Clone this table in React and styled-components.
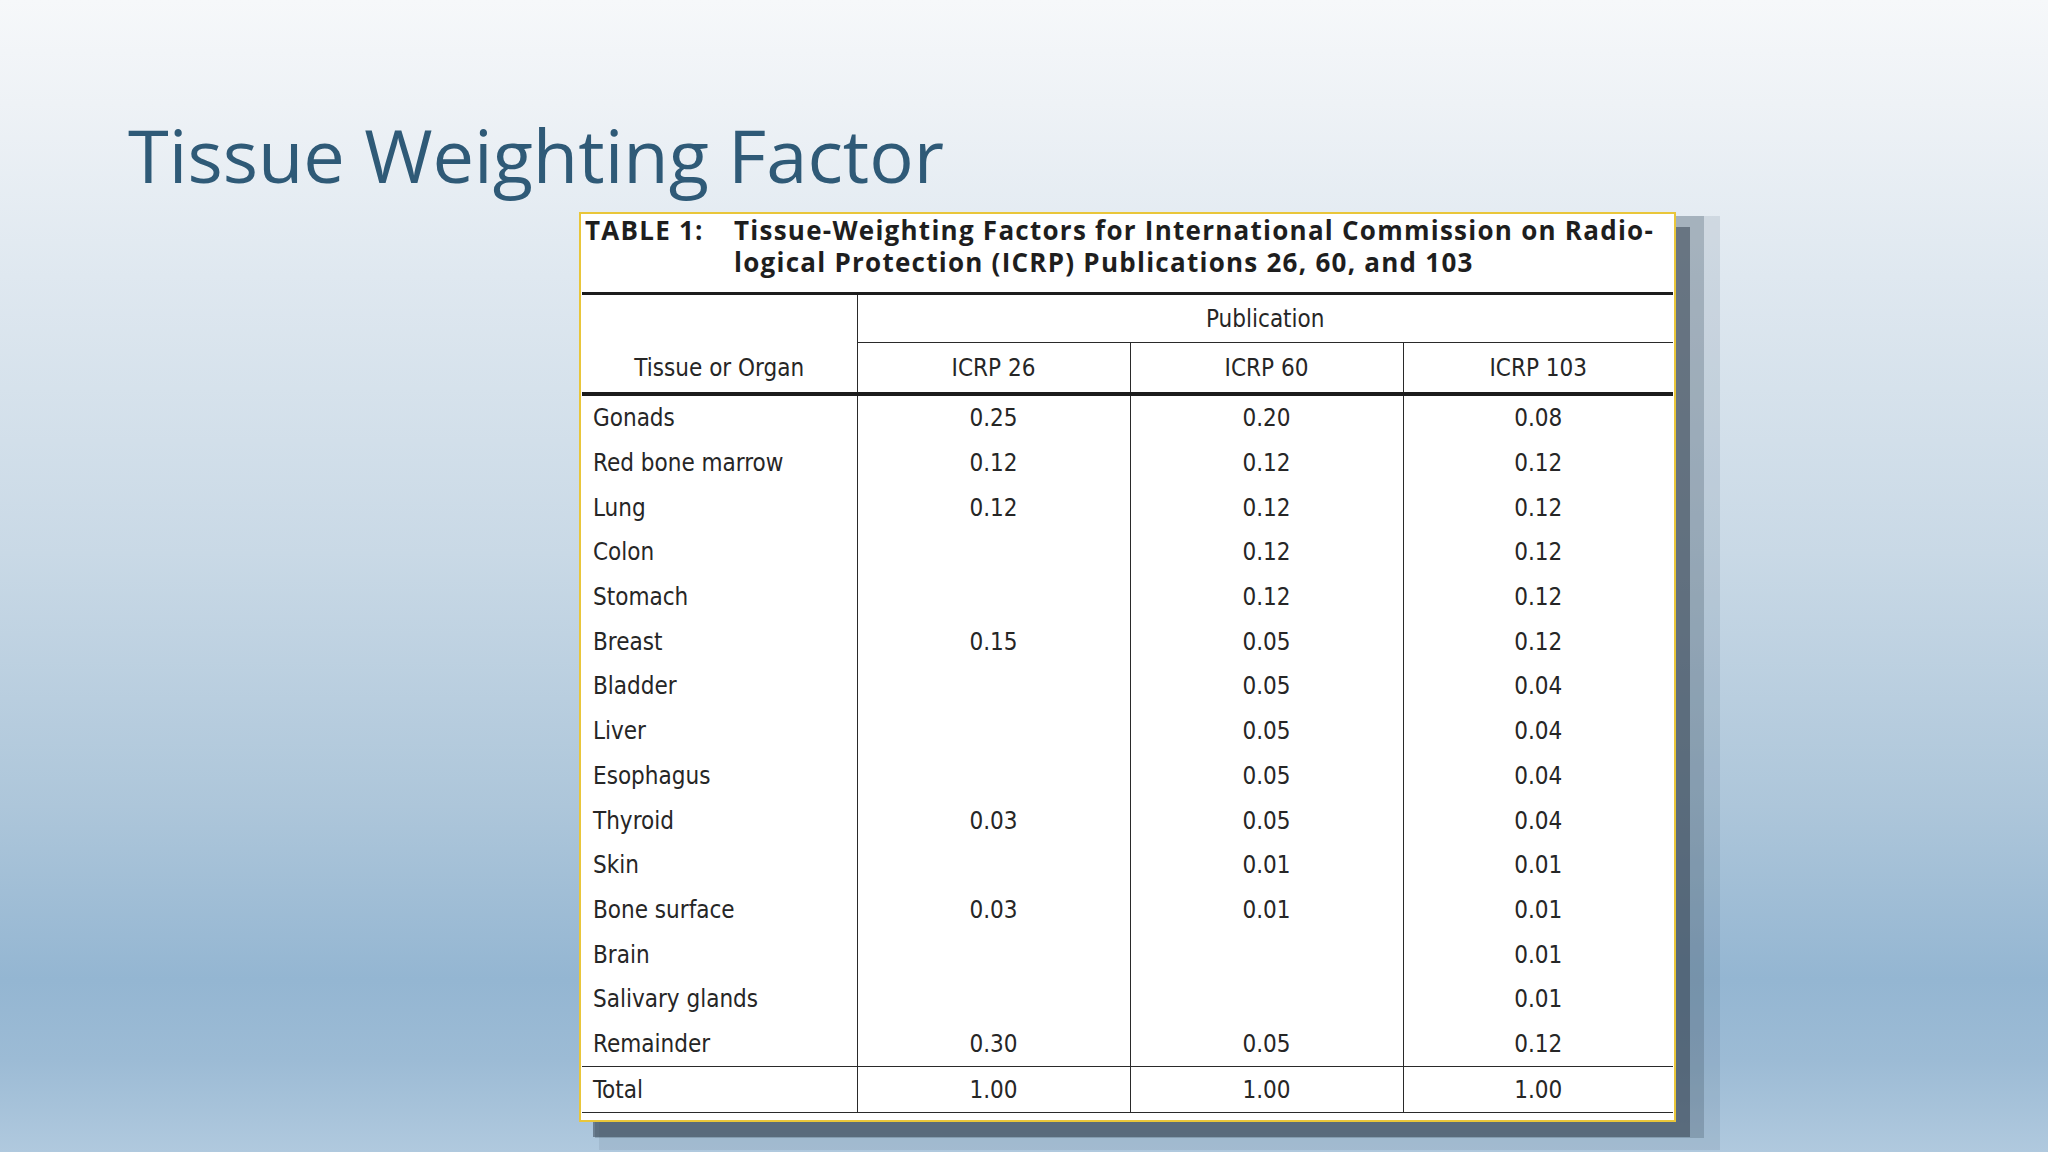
import React from 'react';
import styled, { createGlobalStyle } from 'styled-components';

const GlobalStyle = createGlobalStyle`
  html, body {
    margin: 0;
    padding: 0;
  }
  body {
    font-family: "Liberation Sans", Arial, sans-serif;
  }
`;

const Slide = styled.div`
  width: 2048px;
  height: 1152px;
  overflow: hidden;
  box-sizing: border-box;
  padding: 111px 0 0 128px;
  background: linear-gradient(
    180deg,
    #f6f8fa 0%,
    #eef2f6 9%,
    #dfe8f0 24%,
    #c9d9e6 48%,
    #adc6da 70%,
    #94b6d2 85%,
    #9cbbd5 92%,
    #b0c9de 100%
  );
`;

const Title = styled.h1`
  margin: 0;
  font-family: "Open Sans", "Noto Sans", sans-serif;
  font-weight: 400;
  font-size: 74px;
  font-stretch: 93%;
  line-height: 88px;
  color: #2f5a77;
`;

const Card = styled.div`
  margin: 13px 0 0 451px;
  width: 1097px;
  box-sizing: border-box;
  background: #fff;
  border: 2px solid #e9c63a;
  padding: 0 1px 7px 1px;
  box-shadow:
    14px 15px 0 0 rgba(55, 68, 82, 0.55),
    22px 10px 0 6px rgba(70, 88, 105, 0.3),
    32px 16px 0 12px rgba(85, 105, 125, 0.14);
`;

const Caption = styled.div`
  display: flex;
  padding: 0 0 14px 3px;
  font-family: "Open Sans", "Lato", sans-serif;
  font-weight: 700;
  font-size: 26px;
  line-height: 32px;
  letter-spacing: 1.25px;
  color: #1e1e1e;
  border-bottom: 3px solid #1c1c1c;
`;

const CaptionLabel = styled.div`
  flex: 0 0 149px;
  white-space: nowrap;
`;

const CaptionText = styled.div`
  white-space: nowrap;
`;

const Table = styled.table`
  width: 100%;
  border-collapse: collapse;
  table-layout: fixed;
  font-family: "Liberation Sans Narrow", "DejaVu Sans Condensed", "Liberation Sans", sans-serif;
  font-size: 24px;
  color: #262626;
`;

const HeadCell = styled.th`
  font-weight: 400;
  height: ${p => p.$h || 47}px;
  padding: 0;
  text-align: center;
  vertical-align: ${p => p.$bottom ? 'bottom' : 'middle'};
  padding-bottom: ${p => p.$bottom ? '10px' : '0'};
  border-left: ${p => p.$noLeft ? 'none' : '1.5px solid #2a2a2a'};
  border-bottom: ${p => p.$thick ? '4px solid #1c1c1c' : '1.5px solid #2a2a2a'};
`;

const Row = styled.tr`
  border-top: ${p => p.$total ? '1.5px solid #2a2a2a' : 'none'};
  border-bottom: ${p => p.$total ? '1.5px solid #2a2a2a' : 'none'};
`;

const Cell = styled.td`
  height: ${p => p.$total ? 45 : 44.7}px;
  padding: 0;
  text-align: ${p => p.$left ? 'left' : 'center'};
  padding-left: ${p => p.$left ? '11px' : '0'};
  border-left: ${p => p.$left ? 'none' : '1.5px solid #2a2a2a'};
  white-space: nowrap;
`;

const rows = [
  ['Gonads', '0.25', '0.20', '0.08'],
  ['Red bone marrow', '0.12', '0.12', '0.12'],
  ['Lung', '0.12', '0.12', '0.12'],
  ['Colon', '', '0.12', '0.12'],
  ['Stomach', '', '0.12', '0.12'],
  ['Breast', '0.15', '0.05', '0.12'],
  ['Bladder', '', '0.05', '0.04'],
  ['Liver', '', '0.05', '0.04'],
  ['Esophagus', '', '0.05', '0.04'],
  ['Thyroid', '0.03', '0.05', '0.04'],
  ['Skin', '', '0.01', '0.01'],
  ['Bone surface', '0.03', '0.01', '0.01'],
  ['Brain', '', '', '0.01'],
  ['Salivary glands', '', '', '0.01'],
  ['Remainder', '0.30', '0.05', '0.12'],
];

const App = () => {
  return (
    <Slide>
      <GlobalStyle />
      <Title>Tissue Weighting Factor</Title>
      <Card>
        <Caption>
          <CaptionLabel>TABLE 1:</CaptionLabel>
          <CaptionText>
            Tissue-Weighting Factors for International Commission on Radio-
            <br />
            logical Protection (ICRP) Publications 26, 60, and 103
          </CaptionText>
        </Caption>
        <Table>
          <colgroup>
            <col style={{ width: '275px' }} />
            <col style={{ width: '273px' }} />
            <col style={{ width: '273px' }} />
            <col />
          </colgroup>
          <thead>
            <tr>
              <HeadCell rowSpan={2} $noLeft $thick $bottom>Tissue or Organ</HeadCell>
              <HeadCell colSpan={3}>Publication</HeadCell>
            </tr>
            <tr>
              <HeadCell $thick $h={49}>ICRP 26</HeadCell>
              <HeadCell $thick $h={49}>ICRP 60</HeadCell>
              <HeadCell $thick $h={49}>ICRP 103</HeadCell>
            </tr>
          </thead>
          <tbody>
            {rows.map(r => (
              <Row key={r[0]}>
                <Cell $left>{r[0]}</Cell>
                <Cell>{r[1]}</Cell>
                <Cell>{r[2]}</Cell>
                <Cell>{r[3]}</Cell>
              </Row>
            ))}
            <Row $total>
              <Cell $left $total>Total</Cell>
              <Cell $total>1.00</Cell>
              <Cell $total>1.00</Cell>
              <Cell $total>1.00</Cell>
            </Row>
          </tbody>
        </Table>
      </Card>
    </Slide>
  );
};

export default App;
